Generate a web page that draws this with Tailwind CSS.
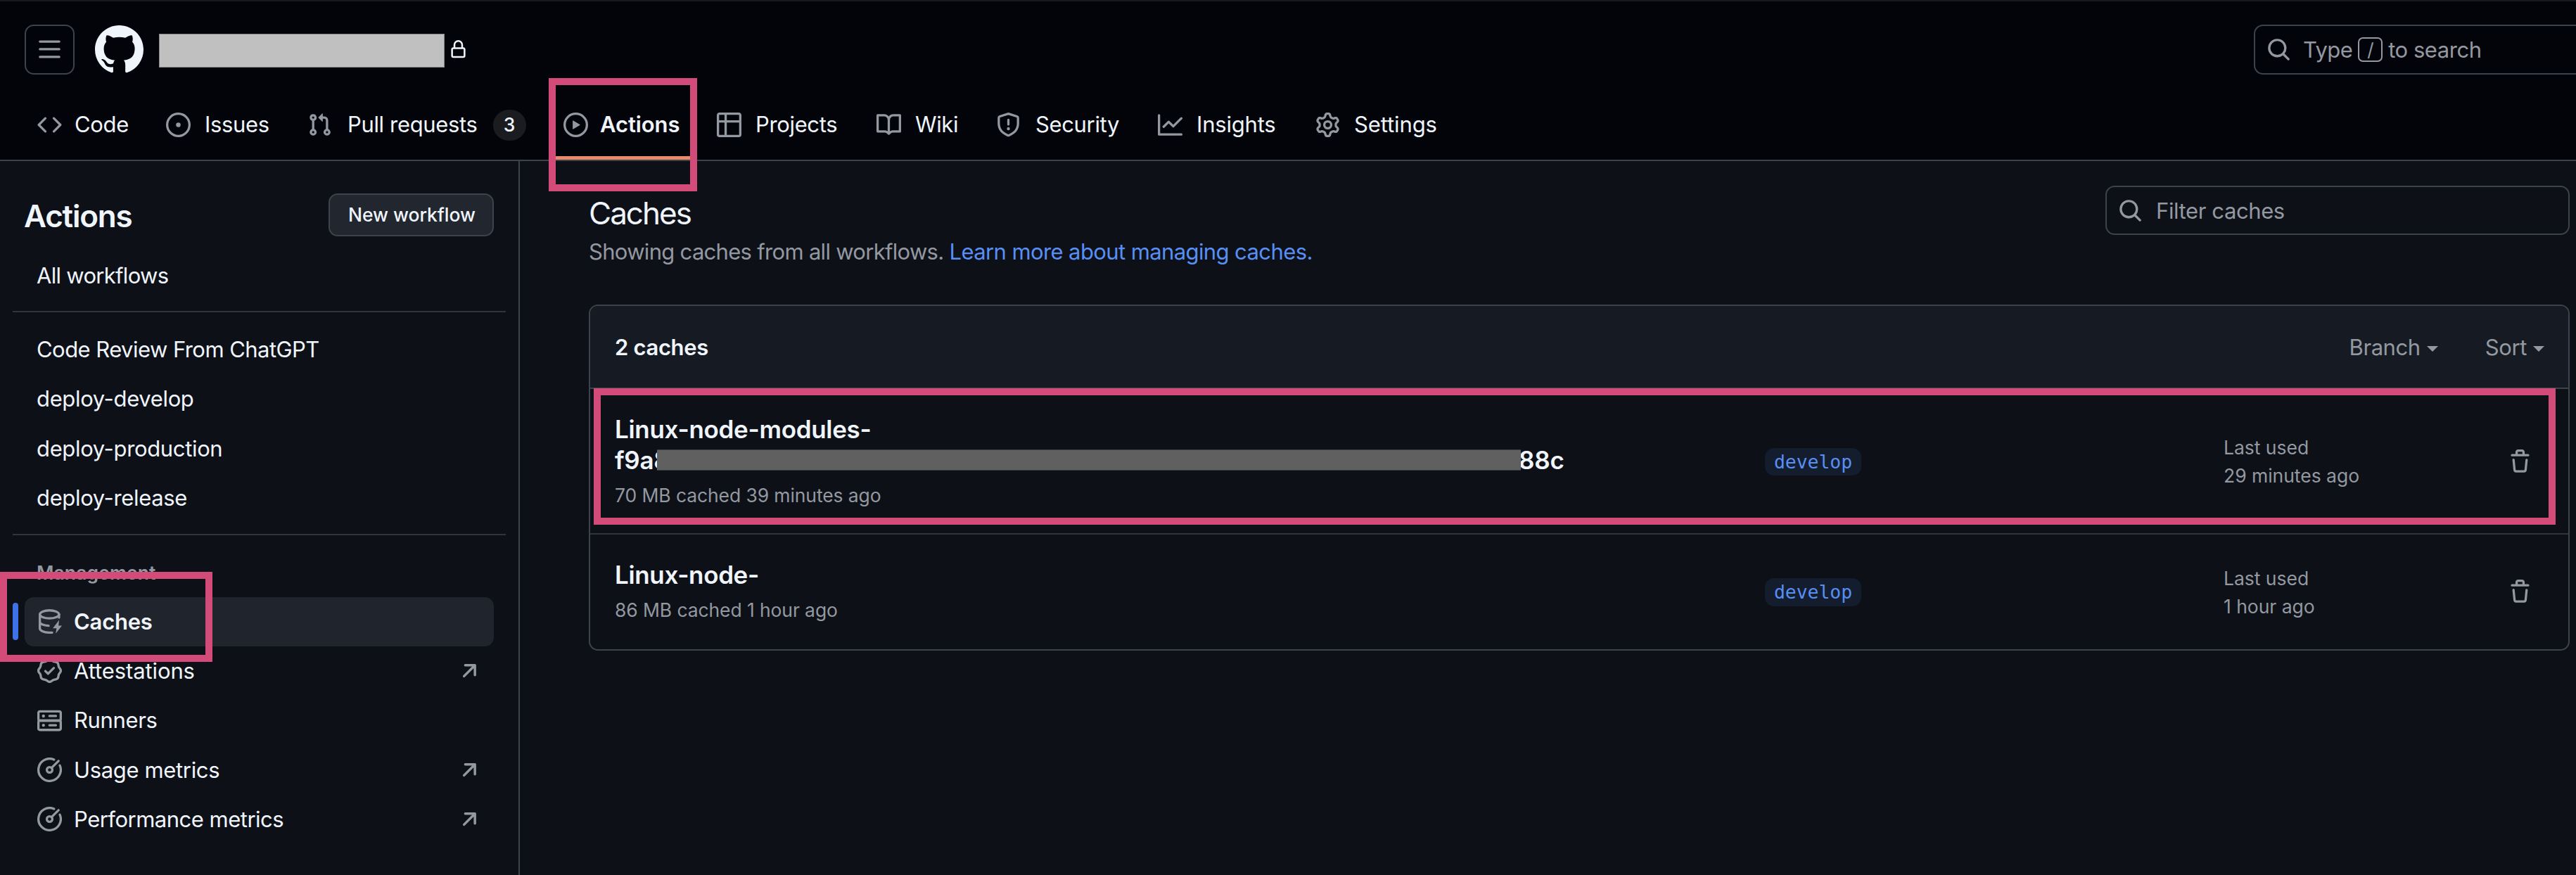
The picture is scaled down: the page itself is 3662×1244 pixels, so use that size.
<!DOCTYPE html>
<html lang="en">
<head>
  <meta charset="UTF-8" />
  <meta name="viewport" content="width=device-width, initial-scale=1.0"/>
  <title>Caches · Actions</title>
  <script src="https://cdn.jsdelivr.net/npm/@tailwindcss/browser@4"></script>
</head>
<body class="bg-[#0d1017] text-[#f0f5fc] font-['Inter',sans-serif] text-[31px] tracking-[-0.35px]">

  <!-- Icon set -->
  <svg class="hidden">
    <symbol id="i-bars" viewBox="0 0 16 16"><path d="M1.75 2.75h12.5M1.75 7.75h12.5M1.75 12.75h12.5" stroke="currentColor" stroke-width="1.5" stroke-linecap="round"/></symbol>
    <symbol id="i-github" viewBox="0 0 16 16"><path d="M8 0c4.42 0 8 3.58 8 8a8.013 8.013 0 0 1-5.45 7.59c-.4.08-.55-.17-.55-.38 0-.27.01-1.13.01-2.2 0-.75-.25-1.23-.54-1.48 1.78-.2 3.65-.88 3.65-3.95 0-.88-.31-1.59-.82-2.15.08-.2.36-1.02-.08-2.12 0 0-.67-.22-2.2.82-.64-.18-1.32-.27-2-.27-.68 0-1.36.09-2 .27-1.53-1.03-2.2-.82-2.2-.82-.44 1.1-.16 1.92-.08 2.12-.51.56-.82 1.28-.82 2.15 0 3.06 1.86 3.75 3.64 3.95-.23.2-.44.55-.51 1.07-.46.21-1.61.55-2.33-.66-.15-.24-.6-.83-1.23-.82-.67.01-.27.38.01.53.34.19.73.9.82 1.13.16.45.68 1.31 2.69.94 0 .67.01 1.3.01 1.49 0 .21-.15.45-.55.38A7.995 7.995 0 0 1 0 8c0-4.42 3.58-8 8-8Z"/></symbol>
    <symbol id="i-lock" viewBox="0 0 16 16"><path d="M4 4a4 4 0 0 1 8 0v2h.25c.966 0 1.75.784 1.75 1.75v5.5A1.75 1.75 0 0 1 12.25 15h-8.5A1.75 1.75 0 0 1 2 13.25v-5.5C2 6.784 2.784 6 3.75 6H4Zm8.25 3.5h-8.5a.25.25 0 0 0-.25.25v5.5c0 .138.112.25.25.25h8.5a.25.25 0 0 0 .25-.25v-5.5a.25.25 0 0 0-.25-.25ZM10.5 6V4a2.5 2.5 0 1 0-5 0v2Z"/></symbol>
    <symbol id="i-search" viewBox="0 0 16 16"><path d="M10.68 11.74a6 6 0 0 1-7.922-8.982 6 6 0 0 1 8.982 7.922l3.04 3.04a.749.749 0 0 1-.326 1.275.749.749 0 0 1-.734-.215ZM11.5 7a4.499 4.499 0 1 0-8.997 0A4.499 4.499 0 0 0 11.5 7Z"/></symbol>
    <symbol id="i-code" viewBox="0 0 16 16"><path d="m11.28 3.22 4.25 4.25a.75.75 0 0 1 0 1.06l-4.25 4.25a.749.749 0 0 1-1.275-.326.749.749 0 0 1 .215-.734L13.94 8l-3.72-3.72a.749.749 0 0 1 .326-1.275.749.749 0 0 1 .734.215Zm-6.56 0a.751.751 0 0 1 1.042.018.751.751 0 0 1 .018 1.042L2.06 8l3.72 3.72a.749.749 0 0 1-.326 1.275.749.749 0 0 1-.734-.215L.47 8.53a.75.75 0 0 1 0-1.06Z"/></symbol>
    <symbol id="i-issue" viewBox="0 0 16 16"><path d="M8 9.5a1.5 1.5 0 1 0 0-3 1.5 1.5 0 0 0 0 3Z"/><path d="M8 0a8 8 0 1 1 0 16A8 8 0 0 1 8 0ZM1.5 8a6.5 6.5 0 1 0 13 0 6.5 6.5 0 0 0-13 0Z"/></symbol>
    <symbol id="i-pr" viewBox="0 0 16 16"><path d="M1.5 3.25a2.25 2.25 0 1 1 3 2.122v5.256a2.251 2.251 0 1 1-1.5 0V5.372A2.25 2.25 0 0 1 1.5 3.25Zm5.677-.177L9.573.677A.25.25 0 0 1 10 .854V2.5h1A2.5 2.5 0 0 1 13.5 5v5.628a2.251 2.251 0 1 1-1.5 0V5a1 1 0 0 0-1-1h-1v1.646a.25.25 0 0 1-.427.177L7.177 3.427a.25.25 0 0 1 0-.354ZM3.75 2.5a.75.75 0 1 0 0 1.5.75.75 0 0 0 0-1.5Zm0 9.5a.75.75 0 1 0 0 1.5.75.75 0 0 0 0-1.5Zm8.25.75a.75.75 0 1 0 1.5 0 .75.75 0 0 0-1.5 0Z"/></symbol>
    <symbol id="i-play" viewBox="0 0 16 16"><path d="M8 0a8 8 0 1 1 0 16A8 8 0 0 1 8 0ZM1.5 8a6.5 6.5 0 1 0 13 0 6.5 6.5 0 0 0-13 0Zm4.879-2.773 4.264 2.559a.25.25 0 0 1 0 .428l-4.264 2.559A.25.25 0 0 1 6 10.559V5.442a.25.25 0 0 1 .379-.215Z"/></symbol>
    <symbol id="i-table" viewBox="0 0 16 16"><path d="M0 1.75C0 .784.784 0 1.75 0h12.5C15.216 0 16 .784 16 1.75v12.5A1.75 1.75 0 0 1 14.25 16H1.75A1.75 1.75 0 0 1 0 14.25ZM6.5 6.5v8h7.75a.25.25 0 0 0 .25-.25V6.5Zm8-1.5V1.75a.25.25 0 0 0-.25-.25H6.5V5Zm-13 1.5v7.75c0 .138.112.25.25.25H5v-8ZM5 5V1.5H1.75a.25.25 0 0 0-.25.25V5Z"/></symbol>
    <symbol id="i-book" viewBox="0 0 16 16"><path d="M0 1.75A.75.75 0 0 1 .75 1h4.253c1.227 0 2.317.59 3 1.501A3.743 3.743 0 0 1 11.006 1h4.245a.75.75 0 0 1 .75.75v10.5a.75.75 0 0 1-.75.75h-4.507a2.25 2.25 0 0 0-1.591.659l-.622.621a.75.75 0 0 1-1.06 0l-.622-.621A2.25 2.25 0 0 0 5.258 13H.75a.75.75 0 0 1-.75-.75Zm7.251 10.324.004-5.073-.002-2.253A2.25 2.25 0 0 0 5.003 2.5H1.5v9h3.757a3.75 3.75 0 0 1 1.994.574ZM8.755 4.75l-.004 7.322a3.752 3.752 0 0 1 1.992-.572H14.5v-9h-3.495a2.25 2.25 0 0 0-2.25 2.25Z"/></symbol>
    <symbol id="i-shield" viewBox="0 0 16 16"><path d="M7.467.133a1.748 1.748 0 0 1 1.066 0l5.25 1.68A1.75 1.75 0 0 1 15 3.48V7c0 1.566-.32 3.182-1.303 4.682-.983 1.498-2.585 2.813-5.032 3.855a1.697 1.697 0 0 1-1.33 0c-2.447-1.042-4.049-2.357-5.032-3.855C1.32 10.182 1 8.566 1 7V3.48a1.75 1.75 0 0 1 1.217-1.667Zm.61 1.429a.25.25 0 0 0-.153 0l-5.25 1.68a.25.25 0 0 0-.174.238V7c0 1.358.275 2.666 1.057 3.86.784 1.194 2.121 2.34 4.366 3.297a.196.196 0 0 0 .154 0c2.245-.956 3.582-2.104 4.366-3.298C13.225 9.666 13.5 8.36 13.5 7V3.48a.251.251 0 0 0-.174-.237l-5.25-1.68ZM8.75 4.75v3a.75.75 0 0 1-1.5 0v-3a.75.75 0 0 1 1.5 0ZM9 10.5a1 1 0 1 1-2 0 1 1 0 0 1 2 0Z"/></symbol>
    <symbol id="i-graph" viewBox="0 0 16 16"><path d="M1.5 1.75V13.5h13.75a.75.75 0 0 1 0 1.5H.75a.75.75 0 0 1-.75-.75V1.75a.75.75 0 0 1 1.5 0Zm14.28 2.53-5.25 5.25a.75.75 0 0 1-1.06 0L7 7.06 4.28 9.78a.751.751 0 0 1-1.042-.018.751.751 0 0 1-.018-1.042l3.25-3.25a.75.75 0 0 1 1.06 0L10 7.94l4.72-4.72a.751.751 0 0 1 1.042.018.751.751 0 0 1 .018 1.042Z"/></symbol>
    <symbol id="i-gear" viewBox="0 0 16 16"><path d="M8 0a8.2 8.2 0 0 1 .701.031C9.444.095 9.99.645 10.16 1.29l.288 1.107c.018.066.079.158.212.224.231.114.454.243.668.386.123.082.233.09.299.071l1.103-.303c.644-.176 1.392.021 1.82.63.27.385.506.792.704 1.218.315.675.111 1.422-.364 1.891l-.814.806c-.049.048-.098.147-.088.294.016.257.016.515 0 .772-.01.147.038.246.088.294l.814.806c.475.469.679 1.216.364 1.891a7.977 7.977 0 0 1-.704 1.217c-.428.61-1.176.807-1.82.63l-1.102-.302c-.067-.019-.177-.011-.3.071a5.909 5.909 0 0 1-.668.386c-.133.066-.194.158-.211.224l-.29 1.106c-.168.646-.715 1.196-1.458 1.26a8.006 8.006 0 0 1-1.402 0c-.743-.064-1.289-.614-1.458-1.26l-.289-1.106c-.018-.066-.079-.158-.212-.224a5.738 5.738 0 0 1-.668-.386c-.123-.082-.233-.09-.299-.071l-1.103.303c-.644.176-1.392-.021-1.82-.63a8.12 8.12 0 0 1-.704-1.218c-.315-.675-.111-1.422.363-1.891l.815-.806c.05-.048.098-.147.088-.294a6.214 6.214 0 0 1 0-.772c.01-.147-.038-.246-.088-.294l-.815-.806C.635 6.045.431 5.298.746 4.623a7.92 7.92 0 0 1 .704-1.217c.428-.61 1.176-.807 1.82-.63l1.102.302c.067.019.177.011.3-.071.214-.143.437-.272.668-.386.133-.066.194-.158.211-.224l.29-1.106C6.009.645 6.556.095 7.299.03 7.53.01 7.764 0 8 0Zm-.571 1.525c-.036.003-.108.036-.137.146l-.289 1.105c-.147.561-.549.967-.998 1.189-.173.086-.34.183-.5.29-.417.278-.97.423-1.529.27l-1.103-.303c-.109-.03-.175.016-.195.045-.22.312-.412.644-.573.99-.014.031-.021.11.059.19l.815.806c.411.406.562.957.53 1.456a4.709 4.709 0 0 0 0 .582c.032.499-.119 1.05-.53 1.456l-.815.806c-.081.08-.073.159-.059.19.162.346.353.677.573.989.02.03.085.076.195.046l1.102-.303c.56-.153 1.113-.008 1.53.27.161.107.328.204.501.29.447.222.85.629.997 1.189l.289 1.105c.029.109.101.143.137.146a6.6 6.6 0 0 0 1.142 0c.036-.003.108-.036.137-.146l.289-1.105c.147-.561.549-.967.998-1.189.173-.086.34-.183.5-.29.417-.278.97-.423 1.529-.27l1.103.303c.109.029.175-.016.195-.045.22-.313.411-.644.573-.99.014-.031.021-.11-.059-.19l-.815-.806c-.411-.406-.562-.957-.53-1.456a4.709 4.709 0 0 0 0-.582c-.032-.499.119-1.05.53-1.456l.815-.806c.081-.08.073-.159.059-.19a6.464 6.464 0 0 0-.573-.989c-.02-.03-.085-.076-.195-.046l-1.102.303c-.56.153-1.113.008-1.53-.27a4.44 4.44 0 0 0-.501-.29c-.447-.222-.85-.629-.997-1.189l-.289-1.105c-.029-.11-.101-.143-.137-.146a6.6 6.6 0 0 0-1.142 0ZM11 8a3 3 0 1 1-6 0 3 3 0 0 1 6 0ZM9.5 8a1.5 1.5 0 1 0-3.001.001A1.5 1.5 0 0 0 9.5 8Z"/></symbol>
    <symbol id="i-cache" viewBox="0 0 16 16"><g fill="none" stroke="currentColor" stroke-width="1.5" stroke-linecap="round"><ellipse cx="7.9" cy="3.4" rx="6.25" ry="2.6"/><path d="M1.65 3.4v9.1c0 1.5 2.6 2.75 5.9 2.75h2.1M14.15 3.4v2.1M1.65 8.2c0 1.4 2.3 2.5 5.7 2.6"/></g><path d="M14.2 7.1 10.1 12.5h2.4L12 15.9l4-5.2h-2.2Z"/></symbol>
    <symbol id="i-verified" viewBox="0 0 16 16"><path d="m9.585.52.929.68c.153.112.331.186.518.215l1.138.175a2.678 2.678 0 0 1 2.24 2.24l.174 1.139c.029.187.103.365.215.518l.68.928a2.677 2.677 0 0 1 0 3.17l-.68.928a1.174 1.174 0 0 0-.215.518l-.175 1.138a2.678 2.678 0 0 1-2.241 2.241l-1.138.175a1.17 1.17 0 0 0-.518.215l-.928.68a2.677 2.677 0 0 1-3.17 0l-.928-.68a1.174 1.174 0 0 0-.518-.215L3.83 14.41a2.678 2.678 0 0 1-2.24-2.24l-.175-1.138a1.17 1.17 0 0 0-.215-.518l-.68-.928a2.677 2.677 0 0 1 0-3.17l.68-.928c.112-.153.186-.331.215-.518l.175-1.14a2.678 2.678 0 0 1 2.24-2.24l1.139-.175c.187-.029.365-.103.518-.215l.928-.68a2.677 2.677 0 0 1 3.17 0ZM7.303 1.728l-.927.68a2.67 2.67 0 0 1-1.18.489l-1.137.174a1.179 1.179 0 0 0-.987.987l-.174 1.136a2.677 2.677 0 0 1-.489 1.18l-.68.928a1.18 1.18 0 0 0 0 1.394l.68.927c.256.348.424.753.489 1.18l.174 1.137c.078.509.478.909.987.987l1.136.174a2.67 2.67 0 0 1 1.18.489l.928.68c.414.305.979.305 1.394 0l.927-.68a2.67 2.67 0 0 1 1.18-.489l1.137-.174a1.18 1.18 0 0 0 .987-.987l.174-1.136a2.67 2.67 0 0 1 .489-1.18l.68-.928a1.176 1.176 0 0 0 0-1.394l-.68-.927a2.686 2.686 0 0 1-.489-1.18l-.174-1.137a1.179 1.179 0 0 0-.987-.987l-1.136-.174a2.677 2.677 0 0 1-1.18-.489l-.928-.68a1.176 1.176 0 0 0-1.394 0ZM11.28 6.78l-3.75 3.75a.75.75 0 0 1-1.06 0L4.72 8.78a.751.751 0 0 1 .018-1.042.751.751 0 0 1 1.042-.018L7 8.94l3.22-3.22a.751.751 0 0 1 1.042.018.751.751 0 0 1 .018 1.042Z"/></symbol>
    <symbol id="i-server" viewBox="0 0 16 16"><g fill="none" stroke="currentColor" stroke-width="1.5" stroke-linecap="round"><rect x=".75" y="1.95" width="14.5" height="6.05" rx="1"/><rect x=".75" y="8" width="14.5" height="6.05" rx="1"/><path d="M7.9 5h4.2M7.9 11h4.2"/></g><circle cx="4" cy="5" r="1"/><circle cx="4" cy="11" r="1"/></symbol>
    <symbol id="i-meter" viewBox="0 0 16 16"><g fill="none" stroke="currentColor" stroke-width="1.5" stroke-linecap="round"><path d="M10.9 1.35A7.25 7.25 0 1 0 14.65 5.1M13.8 2.2 9.3 6.7"/><circle cx="8" cy="8" r="1.8"/></g></symbol>
    <symbol id="i-arrow" viewBox="0 0 16 16"><path d="M5.2 4.5h6.3v6.3M4.4 11.6l6.9-6.9" fill="none" stroke="currentColor" stroke-width="1.6" stroke-linecap="round" stroke-linejoin="round"/></symbol>
    <symbol id="i-trash" viewBox="0 0 16 16"><path d="M11 1.75V3h2.25a.75.75 0 0 1 0 1.5H2.75a.75.75 0 0 1 0-1.5H5V1.75C5 .784 5.784 0 6.75 0h2.5C10.216 0 11 .784 11 1.75ZM4.496 6.675l.66 6.6a.25.25 0 0 0 .249.225h5.19a.25.25 0 0 0 .249-.225l.66-6.6a.75.75 0 0 1 1.492.149l-.66 6.6A1.748 1.748 0 0 1 10.595 15h-5.19a1.75 1.75 0 0 1-1.741-1.575l-.66-6.6a.75.75 0 1 1 1.492-.15ZM6.5 1.75V3h3V1.75a.25.25 0 0 0-.25-.25h-2.5a.25.25 0 0 0-.25.25Z"/></symbol>
  </svg>

  <div class="relative w-[3662px] h-[1244px] overflow-hidden flex flex-col whitespace-nowrap">
    <!-- Header -->
    <header class="h-[229px] shrink-0 flex flex-col bg-[#020409] border-t-2 border-t-[#16191e] border-b-2 border-b-[#3d434c]">
      <div class="flex items-center mt-[33px] pl-[35px] h-[71px]">
        <button class="w-[71px] h-[71px] flex items-center justify-center rounded-[13px] border-2 border-[#3d434c] text-[#9398a1]">
          <svg class="size-[35px] fill-current"><use href="#i-bars"/></svg>
        </button>
        <svg class="ml-[29px] size-[69px] fill-current"><use href="#i-github"/></svg>
        <div class="ml-[22px] mt-[3px] w-[406px] h-[48px] bg-[#c0c0c0] border border-[#8a8a8a]"></div>
        <svg class="ml-[6px] size-[27px] fill-current"><use href="#i-lock"/></svg>
        <div class="ml-auto w-[458px] h-[71px] flex items-center rounded-l-[13px] border-2 border-r-0 border-[#3d434c] text-[#9398a1]">
          <svg class="ml-[16px] size-[35px] fill-current"><use href="#i-search"/></svg>
          <span class="ml-[17px] mt-px tracking-[-0.6px]">Type</span>
          <kbd class="ml-[8px] mr-[8px] size-[35px] flex items-center justify-center rounded-[7px] border-2 border-[#9398a1] font-['Inter',sans-serif] text-[26px]">/</kbd>
          <span class="mt-px tracking-[-0.45px]">to search</span>
        </div>
      </div>

      <nav class="flex flex-1 items-center pl-[53px] pt-[22px]">
        <a class="w-[183px] flex items-center gap-[18px]"><svg class="size-[35px] fill-current text-[#9398a1]"><use href="#i-code"/></svg><span>Code</span></a>
        <a class="w-[201px] flex items-center gap-[20px]"><svg class="size-[35px] fill-current text-[#9398a1]"><use href="#i-issue"/></svg><span>Issues</span></a>
        <a class="w-[364px] flex items-center gap-[22px]"><svg class="size-[35px] fill-current text-[#9398a1]"><use href="#i-pr"/></svg><span>Pull requests</span>
          <span class="w-[47px] h-[44px] flex items-center justify-center rounded-full bg-[#1a1c20] text-[26.5px] font-medium">3</span>
        </a>
        <a class="w-[218px] flex items-center gap-[17px] font-semibold tracking-[-0.1px]"><svg class="size-[35px] fill-current text-[#9398a1]"><use href="#i-play"/></svg><span>Actions</span></a>
        <a class="w-[227px] flex items-center gap-[20px]"><svg class="size-[35px] fill-current text-[#9398a1]"><use href="#i-table"/></svg><span>Projects</span></a>
        <a class="w-[170px] flex items-center gap-[20px]"><svg class="size-[35px] fill-current text-[#9398a1]"><use href="#i-book"/></svg><span>Wiki</span></a>
        <a class="w-[230px] flex items-center gap-[21px]"><svg class="size-[35px] fill-current text-[#9398a1]"><use href="#i-shield"/></svg><span>Security</span></a>
        <a class="w-[224px] flex items-center gap-[20px]"><svg class="size-[35px] fill-current text-[#9398a1]"><use href="#i-graph"/></svg><span class="tracking-[-0.2px]">Insights</span></a>
        <a class="flex items-center gap-[20px]"><svg class="size-[35px] fill-current text-[#9398a1]"><use href="#i-gear"/></svg><span class="tracking-[-0.1px]">Settings</span></a>
      </nav>
    </header>

    <div class="flex flex-1">
      <!-- Sidebar -->
      <aside class="w-[739px] border-r-2 border-[#3d434c]">
        <div class="flex items-center justify-between pl-[34px] pr-[35px] mt-[46px] h-[61px]">
          <h2 class="text-[44px] font-semibold leading-[64px] tracking-[-1.2px] mt-[3px]">Actions</h2>
          <button class="w-[235px] h-[61px] pl-[2px] pt-px rounded-[13px] border-2 border-[#3d434c] bg-[#22262e] text-[26.5px] font-medium tracking-[-0.05px]">New workflow</button>
        </div>
        <div class="mt-[21px] h-[70px] pl-[52px] flex items-center tracking-[-0.7px]">All workflows</div>
        <div class="mt-[15px] mx-[18px] h-[2px] bg-[#30353d]"></div>
        <div class="mt-[18px] pl-[52px] flex flex-col">
          <a class="h-[70.4px] flex items-center tracking-[-0.55px]">Code Review From ChatGPT</a>
          <a class="h-[70.4px] flex items-center">deploy-develop</a>
          <a class="h-[70.4px] flex items-center">deploy-production</a>
          <a class="h-[70.4px] flex items-center">deploy-release</a>
        </div>
        <div class="mt-[15px] mx-[18px] h-[2px] bg-[#30353d]"></div>
        <div class="mt-[34px] h-[40px] pl-[52px] flex items-center text-[26.5px] font-semibold tracking-[0.1px] text-[#9398a1]">Management</div>
        <div class="mt-[14px] flex items-center pl-[18px]">
          <span class="w-[8px] h-[53px] rounded-full bg-[#3f71e8]"></span>
          <a class="ml-[9px] w-[667px] h-[70px] pl-[18px] flex items-center gap-[17px] rounded-[13px] bg-[#20242c] font-semibold tracking-[-0.25px]"><svg class="size-[35px] fill-current text-[#9398a1]"><use href="#i-cache"/></svg><span class="mt-px">Caches</span></a>
        </div>
        <div class="pl-[53px] pr-[52px] flex flex-col">
          <a class="h-[70.4px] flex items-center gap-[17px] tracking-[-0.1px]"><svg class="size-[35px] fill-current text-[#9398a1]"><use href="#i-verified"/></svg><span class="mt-px">Attestations</span><svg class="ml-auto size-[35px] text-[#9398a1]"><use href="#i-arrow"/></svg></a>
          <a class="h-[70.4px] flex items-center gap-[17px]"><svg class="size-[35px] fill-current text-[#9398a1]"><use href="#i-server"/></svg><span class="mt-px">Runners</span></a>
          <a class="h-[70.4px] flex items-center gap-[17px]"><svg class="size-[35px] text-[#9398a1]"><use href="#i-meter"/></svg><span class="mt-px">Usage metrics</span><svg class="ml-auto size-[35px] text-[#9398a1]"><use href="#i-arrow"/></svg></a>
          <a class="h-[70.4px] flex items-center gap-[17px] tracking-[-0.5px]"><svg class="size-[35px] text-[#9398a1]"><use href="#i-meter"/></svg><span class="mt-px">Performance metrics</span><svg class="ml-auto size-[35px] text-[#9398a1]"><use href="#i-arrow"/></svg></a>
        </div>
      </aside>

      <!-- Main content -->
      <main class="flex-1 pl-[98px] pr-[9px]">
        <div class="flex items-start justify-between h-[204px] pt-[35px]">
          <div>
            <h1 class="mt-[9px] text-[44px] leading-[60px] tracking-[-2px]">Caches</h1>
            <p class="mt-[5px] leading-[40px] tracking-[-0.7px] text-[#9398a1]">Showing caches from all workflows. <a class="tracking-[-0.6px] text-[#588ff4]">Learn more about managing caches.</a></p>
          </div>
          <div class="w-[660px] h-[70px] flex items-center rounded-[13px] border-2 border-[#3d434c] text-[#9398a1]">
            <svg class="ml-[16px] size-[35px] fill-current"><use href="#i-search"/></svg>
            <span class="ml-[19px] mt-[2px] tracking-[-0.4px]">Filter caches</span>
          </div>
        </div>

        <div class="h-[492px] rounded-[13px] border-2 border-[#3d434c] overflow-hidden">
          <div class="h-[118px] flex items-center pt-[2px] pl-[35px] pr-[34px] bg-[#161b23] border-b-2 border-[#3d434c]">
            <span class="font-semibold tracking-[-0.35px]">2 caches</span>
            <div class="ml-auto flex items-center gap-[67px] text-[#9398a1]">
              <span class="flex items-center gap-[9px] tracking-[-0.45px]">Branch<span class="mt-[4px] border-x-8 border-t-8 border-x-transparent border-t-[#9398a1]"></span></span>
              <span class="flex items-center gap-[9px]">Sort<span class="mt-[4px] border-x-8 border-t-8 border-x-transparent border-t-[#9398a1]"></span></span>
            </div>
          </div>

          <div class="h-[207px] grid grid-cols-[1635px_650px_404px_35px] items-center pl-[35px] border-b-2 border-[#30353d]">
            <div class="self-start pt-[35px]">
              <div class="text-[35px] leading-[44px] font-semibold tracking-[-0.3px]">
                <div>Linux-node-modules-</div>
                <div class="flex items-center h-[44px]">
                  <span class="w-[60px]">f9a8</span>
                  <span class="relative w-[1228px] h-[30px] shrink-0 bg-[#606060] border-y border-[#3c3e42]"></span>
                  <span class="-ml-[3px] tracking-[-0.1px]">88c</span>
                </div>
              </div>
              <div class="mt-[8px] text-[26.5px] leading-[40px] tracking-[-0.1px] text-[#9398a1]">70 MB cached 39 minutes ago</div>
            </div>
            <span class="w-[137px] h-[39px] mt-px pt-px flex items-center justify-center rounded-[13px] bg-[#141d2d] font-['DejaVu_Sans_Mono',monospace] text-[26.4px] tracking-normal text-[#588ff4]">develop</span>
            <div class="ml-[2px] text-[26.5px] leading-[40px] tracking-[-0.02px] text-[#9398a1]">
              <div>Last used</div>
              <div>29 minutes ago</div>
            </div>
            <svg class="ml-[2px] mt-[2px] size-[35px] fill-current text-[#9398a1]"><use href="#i-trash"/></svg>
          </div>

          <div class="h-[163px] grid grid-cols-[1635px_650px_404px_35px] items-center pl-[35px]">
            <div class="self-start pt-[35px]">
              <div class="text-[35px] leading-[44px] font-semibold tracking-[-0.35px]">Linux-node-</div>
              <div class="mt-[8px] text-[26.5px] leading-[40px] tracking-[-0.1px] text-[#9398a1]">86 MB cached 1 hour ago</div>
            </div>
            <span class="w-[137px] h-[40px] flex items-center justify-center rounded-[13px] bg-[#141d2d] font-['DejaVu_Sans_Mono',monospace] text-[26.4px] tracking-normal text-[#588ff4]">develop</span>
            <div class="ml-[2px] text-[26.5px] leading-[40px] tracking-[-0.02px] text-[#9398a1]">
              <div>Last used</div>
              <div>1 hour ago</div>
            </div>
            <svg class="ml-[2px] size-[35px] fill-current text-[#9398a1]"><use href="#i-trash"/></svg>
          </div>
        </div>
      </main>
    </div>

    <!-- Active tab underline and highlight boxes -->
    <div class="absolute left-[784px] top-[222px] w-[204px] h-[5px] bg-[#e98a6a]"></div>
    <div class="absolute left-[780px] top-[111px] w-[211px] h-[161px] border-10 border-[#d34b79]"></div>
    <div class="absolute left-0 top-[813px] w-[302px] h-[128px] border-10 border-[#d34b79]"></div>
    <div class="absolute left-[844px] top-[552px] w-[2789px] h-[194px] border-10 border-[#d34b79]"></div>
  </div>
</body>
</html>
